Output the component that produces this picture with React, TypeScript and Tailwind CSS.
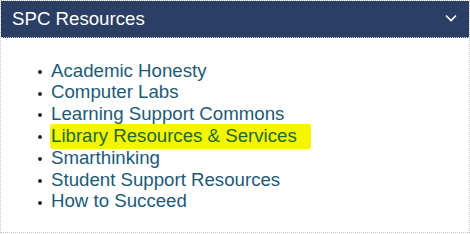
const LINKS = [
  "Academic Honesty",
  "Computer Labs",
  "Learning Support Commons",
  "Library Resources & Services",
  "Smarthinking",
  "Student Support Resources",
  "How to Succeed",
];

export default function App() {
  return (
    <div className="w-[470px] h-[234px] bg-white font-['Liberation_Sans',Arial,sans-serif]">
      <div className="h-[233px] border border-dotted border-[#c4c4c4] flex flex-col">
        <div className="h-[37px] bg-[#2b3e63] flex items-center justify-between pl-[11px] pr-[12px] border-b border-dotted border-[#d0d4dc]">
          <span className="text-white text-[18.67px] leading-none mt-[1px]">SPC Resources</span>
          <svg width="12" height="8" viewBox="0 0 12 8" className="mt-[-2px]">
            <polyline points="1,1.5 6,6.5 11,1.5" fill="none" stroke="#ffffff" strokeWidth="1.6" />
          </svg>
        </div>
        <ul className="pt-[22px] pl-[37px]">
          {LINKS.map((label, i) => (
            <li key={label} className="flex items-center h-[21.8px] text-[18.67px] leading-none">
              <span className="w-[4px] h-[4px] rounded-full bg-[#2a2a2a] mr-[9px] mt-[2px]" />
              {i === 3 ? (
                <span className="bg-[#f5f500] text-[#1d6a2a] pr-[14px] pt-[3px] pb-[3px] -ml-[1px] pl-[1px] rounded-[3px]">
                  {label}
                </span>
              ) : (
                <span className="text-[#1c5a78]">{label}</span>
              )}
            </li>
          ))}
        </ul>
      </div>
    </div>
  );
}
